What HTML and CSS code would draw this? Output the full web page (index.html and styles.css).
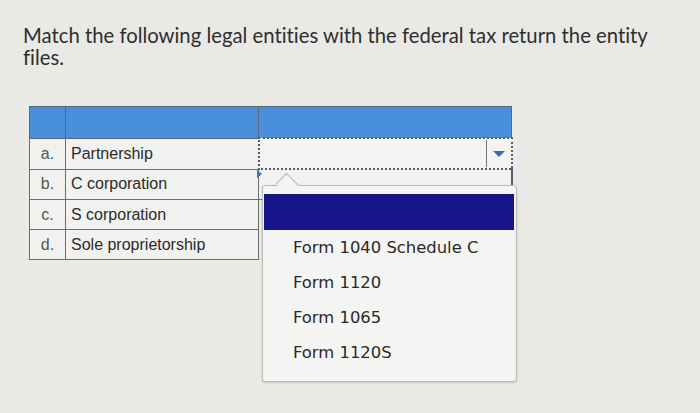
FILE: index.html
```html
<!DOCTYPE html>
<html lang="en">

<head>
  <meta charset="UTF-8">
  <meta name="viewport" content="width=device-width, initial-scale=1.0">
  <title>Matching question</title>
  <link rel="stylesheet" href="styles.css">
</head>

<body>
  <div class="question">
    <p class="prompt">Match the following legal entities with the federal tax return the entity files.</p>

    <div class="match-wrap">
      <table class="match-table">
        <thead>
          <tr>
            <th class="col-letter"></th>
            <th class="col-name"></th>
            <th class="col-answer"></th>
          </tr>
        </thead>
        <tbody>
          <tr>
            <td class="letter">a.</td>
            <td class="name">Partnership</td>
            <td class="answer answer-active">
              <div class="select-box">
                <span class="select-value"></span>
                <span class="select-arrow"></span>
              </div>
            </td>
          </tr>
          <tr>
            <td class="letter">b.</td>
            <td class="name">C corporation</td>
            <td class="answer answer-next"></td>
          </tr>
          <tr>
            <td class="letter">c.</td>
            <td class="name">S corporation</td>
            <td class="answer answer-empty"></td>
          </tr>
          <tr>
            <td class="letter">d.</td>
            <td class="name">Sole proprietorship</td>
            <td class="answer answer-empty"></td>
          </tr>
        </tbody>
      </table>

      <span class="row-pointer"></span>

      <div class="dropdown">
        <span class="dropdown-notch"></span>
        <ul class="options">
          <li class="option option-selected"></li>
          <li class="option">Form 1040 Schedule C</li>
          <li class="option">Form 1120</li>
          <li class="option">Form 1065</li>
          <li class="option">Form 1120S</li>
        </ul>
      </div>
    </div>
  </div>
</body>

</html>
```

FILE: styles.css
```css
body {
  margin: 0;
  height: 413px;
  background-color: #e9e9e6;
  font-family: "Liberation Sans", Arial, sans-serif;
  color: #333;
  overflow: hidden;
}

.question {
  padding: 24px 0 0 23px;
}

.prompt {
  margin: 0;
  width: 660px;
  font-family: Lato, "Liberation Sans", sans-serif;
  font-size: 20.3px;
  line-height: 22px;
  color: #2e2e2e;
  font-variant-ligatures: none;
}

.match-wrap {
  position: relative;
  margin: 38px 0 0 6px;
  width: 500px;
}

.match-table {
  border-collapse: collapse;
  font-size: 16px;
}

.match-table th {
  height: 30px;
  padding: 0;
  background-color: #4a8fdb;
  border: 1px solid #5a6678;
}

.col-letter {
  width: 35px;
}

.col-name {
  width: 192px;
}

.col-answer {
  width: 252px;
}

.match-table td {
  height: 29px;
  padding: 0;
  border: 1px solid #6c6c6c;
  background-color: #f1f1ef;
}

.letter {
  text-align: center;
  color: #555;
}

.name {
  padding-left: 5px !important;
  color: #2b2b2b;
}

.answer-active {
  border: 2px dotted #51606f !important;
  background-color: #f3f3f1 !important;
}

.select-box {
  display: flex;
  height: 27px;
}

.select-value {
  flex: 1;
}

.select-arrow {
  width: 24px;
  border-left: 1px solid #777;
  display: flex;
  align-items: center;
  justify-content: center;
}

.select-arrow::after {
  content: "";
  border-left: 6px solid transparent;
  border-right: 6px solid transparent;
  border-top: 6px solid #3b6aa8;
}

.answer-next {
  border-top: 2px dotted #51606f !important;
  border-left: 1px solid #6c6c6c;
  border-right: 2px solid #55606c !important;
}

.answer-empty {
  border: none !important;
  background-color: transparent !important;
}

.row-pointer {
  position: absolute;
  left: 228px;
  top: 64px;
  border-top: 4px solid transparent;
  border-bottom: 4px solid transparent;
  border-left: 5px solid #3f73b8;
}

.dropdown {
  position: absolute;
  left: 233px;
  top: 79px;
  width: 253px;
  background-color: #f4f4f2;
  border: 1px solid #b9b9b6;
  border-radius: 3px;
  box-shadow: 0 1px 2px rgba(0, 0, 0, 0.15);
}

.dropdown-notch {
  position: absolute;
  left: 17px;
  top: -9px;
  width: 14px;
  height: 14px;
  background-color: #f4f4f2;
  border-left: 1px solid #b9b9b6;
  border-top: 1px solid #b9b9b6;
  transform: rotate(45deg) scaleX(1.2);
  transform-origin: center;
}

.options {
  position: relative;
  list-style: none;
  margin: 0;
  padding: 8px 2px 11px 1px;
}

.option {
  height: 35px;
  line-height: 35px;
  padding-left: 29px;
  font-family: "DejaVu Sans", Verdana, sans-serif;
  font-size: 16.4px;
  color: #2a2a2a;
}

.option-selected {
  height: 36px;
  background-color: #16168a;
}
```
